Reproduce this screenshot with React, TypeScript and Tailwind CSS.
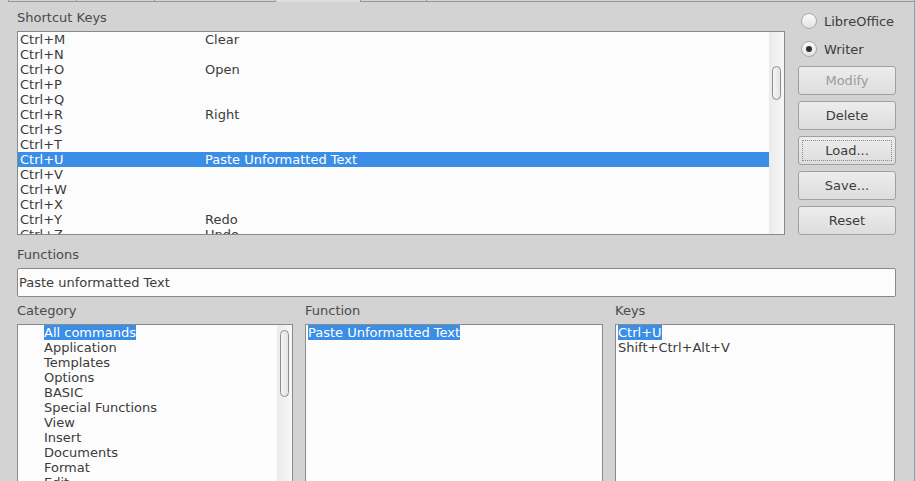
import React from 'react';

const shortcuts: [string, string][] = [
  ['Ctrl+M', 'Clear'],
  ['Ctrl+N', ''],
  ['Ctrl+O', 'Open'],
  ['Ctrl+P', ''],
  ['Ctrl+Q', ''],
  ['Ctrl+R', 'Right'],
  ['Ctrl+S', ''],
  ['Ctrl+T', ''],
  ['Ctrl+U', 'Paste Unformatted Text'],
  ['Ctrl+V', ''],
  ['Ctrl+W', ''],
  ['Ctrl+X', ''],
  ['Ctrl+Y', 'Redo'],
  ['Ctrl+Z', 'Undo'],
];

const categories = [
  'All commands',
  'Application',
  'Templates',
  'Options',
  'BASIC',
  'Special Functions',
  'View',
  'Insert',
  'Documents',
  'Format',
  'Edit',
];

function Radio({ label, checked }: { label: string; checked?: boolean }) {
  return (
    <div className="flex h-[28px] items-center">
      <span className="ml-[3px] flex h-[16px] w-[16px] items-center justify-center rounded-full border border-[#a8a8a8] bg-gradient-to-b from-[#fbfbfb] to-[#e2e2e2]">
        {checked && <span className="h-[6px] w-[6px] rounded-full bg-[#2e2e2e]" />}
      </span>
      <span className="ml-[7px] text-[#3c3c3c]">{label}</span>
    </div>
  );
}

function Button({ label, disabled, focused }: { label: string; disabled?: boolean; focused?: boolean }) {
  return (
    <div className="relative flex h-[29px] items-center justify-center rounded-[3px] border border-[#a0a0a0] bg-gradient-to-b from-[#ededed] to-[#dddddd]">
      {focused && <span className="absolute inset-[3px] border border-dotted border-[#8c8c8c]" />}
      <span className={disabled ? 'text-[#9c9c9c]' : 'text-[#3c3c3c]'}>{label}</span>
    </div>
  );
}

function ScrollTrack({ thumbTop, thumbHeight }: { thumbTop: number; thumbHeight: number }) {
  return (
    <div className="relative h-full w-[15px] shrink-0 bg-gradient-to-r from-[#ebebeb] to-[#f7f7f7]">
      <div
        className="absolute left-[3px] w-[9px] rounded-full border border-[#8e8e8e] bg-gradient-to-r from-[#f4f4f4] to-[#e4e4e4]"
        style={{ top: thumbTop, height: thumbHeight }}
      />
    </div>
  );
}

function TopStrip() {
  const segs: { w: number; light?: boolean }[] = [
    { w: 8 },
    { w: 68 },
    { w: 78 },
    { w: 121 },
    { w: 85, light: true },
    { w: 66 },
    { w: 488 },
  ];
  return (
    <div className="flex h-[2px]">
      {segs.map((s, i) => (
        <div
          key={i}
          className={
            i === 0
              ? 'h-[2px] shrink-0'
              : s.light
              ? 'h-[2px] shrink-0 border-l border-[#a8a8a8] bg-[#dedede]'
              : 'h-[2px] shrink-0 border-l border-b border-[#979797]'
          }
          style={{ width: s.w }}
        />
      ))}
    </div>
  );
}

export default function App() {
  return (
    <div
      className="h-[481px] w-[916px] overflow-hidden bg-[#d3d3d3] text-[13px] leading-[15px] text-[#3b3b3b]"
      style={{ fontFamily: '"DejaVu Sans", Verdana, sans-serif' }}
    >
      <div className="h-full w-[915px] border-r border-[#9a9a9a]">
        <TopStrip />
        <div className="pl-[17px]">
          {/* Shortcut keys + side buttons */}
          <div className="flex">
            <div className="w-[768px] pt-[8px]">
              <div className="h-[15px] text-[#4a4a4a]">Shortcut Keys</div>
              <div className="mt-[6px] flex h-[204px] overflow-hidden border border-[#8a8a8a] bg-[#fcfcfc]">
                <div className="flex-1 overflow-hidden">
                  {shortcuts.map(([k, f]) => {
                    const sel = k === 'Ctrl+U';
                    return (
                      <div
                        key={k}
                        className={
                          sel
                            ? 'flex h-[15px] bg-[#3a8ee6] pl-[2px] text-white'
                            : 'flex h-[15px] pl-[2px]'
                        }
                      >
                        <span className="w-[185px] shrink-0">{k}</span>
                        <span>{f}</span>
                      </div>
                    );
                  })}
                </div>
                <ScrollTrack thumbTop={34} thumbHeight={34} />
              </div>
            </div>
            <div className="ml-[13px] w-[98px] pt-[5px]">
              <Radio label="LibreOffice" />
              <Radio label="Writer" checked />
              <div className="mt-[3px] flex flex-col gap-[6px]">
                <Button label="Modify" disabled />
                <Button label="Delete" />
                <Button label="Load..." focused />
                <Button label="Save..." />
                <Button label="Reset" />
              </div>
            </div>
          </div>

          {/* Functions */}
          <div className="mt-[12px] h-[15px] text-[#4a4a4a]">Functions</div>
          <div className="mt-[6px] flex h-[29px] w-[879px] items-center rounded-[2px] border border-[#8a8a8a] bg-[#fcfcfc] pl-[1px]">
            Paste unformatted Text
          </div>

          {/* Category / Function / Keys */}
          <div className="mt-[6px] flex gap-[12px]">
            <div className="w-[276px] shrink-0">
              <div className="h-[15px] text-[#4a4a4a]">Category</div>
              <div className="mt-[6px] flex h-[180px] border border-[#8a8a8a] bg-[#fcfcfc]">
                <div className="flex-1 overflow-hidden pl-[26px]">
                  {categories.map((c, i) => (
                    <div key={c} className="h-[15px]">
                      <span className={i === 0 ? 'bg-[#3a8ee6] text-white' : ''}>{c}</span>
                    </div>
                  ))}
                </div>
                <ScrollTrack thumbTop={5} thumbHeight={67} />
              </div>
            </div>
            <div className="w-[298px] shrink-0">
              <div className="h-[15px] text-[#4a4a4a]">Function</div>
              <div className="mt-[6px] h-[180px] border border-[#8a8a8a] bg-[#fcfcfc] pl-[2px]">
                <div className="h-[15px]">
                  <span className="bg-[#3a8ee6] text-white">Paste Unformatted Text</span>
                </div>
              </div>
            </div>
            <div className="w-[280px] shrink-0">
              <div className="h-[15px] text-[#4a4a4a]">Keys</div>
              <div className="mt-[6px] h-[180px] border border-[#8a8a8a] bg-[#fcfcfc] pl-[2px]">
                <div className="h-[15px]">
                  <span className="bg-[#3a8ee6] text-white">Ctrl+U</span>
                </div>
                <div className="h-[15px]">Shift+Ctrl+Alt+V</div>
              </div>
            </div>
          </div>
        </div>
      </div>
    </div>
  );
}
